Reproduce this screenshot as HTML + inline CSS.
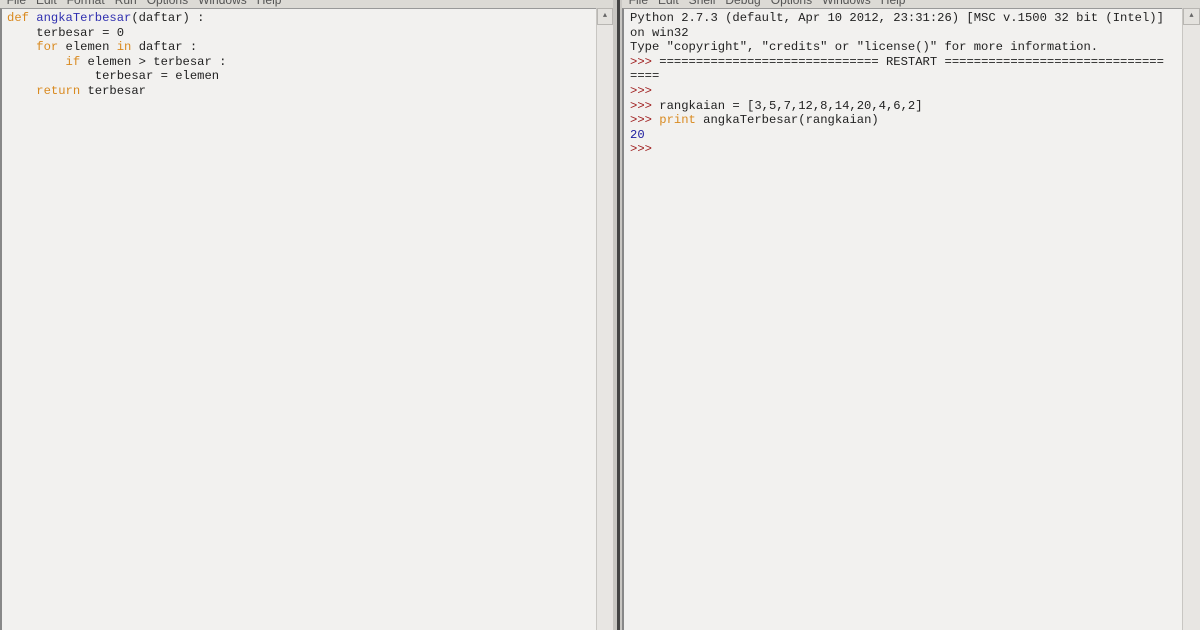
<!DOCTYPE html>
<html><head><style>
body{margin:0;width:1200px;height:630px;overflow:hidden;background:#d4d0c8;position:relative;font-family:"Liberation Mono",monospace;}
.menu{position:absolute;top:0;height:8px;background:#dcdad5;font:12px "Liberation Sans",sans-serif;color:#555;line-height:0px;overflow:hidden;white-space:pre}
.pane{position:absolute;top:8px;bottom:0;background:#f2f1ef;}
pre{margin:0;font-family:"Liberation Mono",monospace;font-size:12.2px;line-height:14.6px;color:#222;position:absolute}
.k{color:#d98a20}.f{color:#3030b0}.p{color:#a02020}.o{color:#2020a0}
.sb{position:absolute;top:8px;bottom:0;width:17px;background:#e8e6e3;border-left:1px solid #c8c6c2}
.btn{position:absolute;left:0;top:0;width:16px;height:17px;background:#e4e2de;border:1px solid #b8b6b2;box-sizing:border-box;font-size:7px;color:#666;text-align:center;line-height:15px}
</style></head><body>
<div class="menu" style="left:0;width:613px">  File   Edit   Format   Run   Options   Windows   Help</div>
<div class="menu" style="left:622px;width:578px">  File   Edit   Shell   Debug   Options   Windows   Help</div>
<div class="pane" style="left:0;width:596px;border-left:2px solid #888;box-sizing:border-box;border-top:1px solid #999">
<pre style="left:5px;top:2px"><span class="k">def</span> <span class="f">angkaTerbesar</span>(daftar) :
    terbesar = 0
    <span class="k">for</span> elemen <span class="k">in</span> daftar :
        <span class="k">if</span> elemen &gt; terbesar :
            terbesar = elemen
    <span class="k">return</span> terbesar</pre>
</div>
<div class="sb" style="left:596px"><div class="btn">▲</div></div>
<div style="position:absolute;left:613px;top:0;width:9px;bottom:0;background:#c9c7c3"></div>
<div style="position:absolute;left:617px;top:0;width:3px;bottom:0;background:#444"></div>
<div class="pane" style="left:622px;width:560px;border-left:2px solid #888;box-sizing:border-box;border-top:1px solid #999">
<pre style="left:6px;top:2px">Python 2.7.3 (default, Apr 10 2012, 23:31:26) [MSC v.1500 32 bit (Intel)]
on win32
Type "copyright", "credits" or "license()" for more information.
<span class="p">&gt;&gt;&gt;</span> ============================== RESTART ==============================
====
<span class="p">&gt;&gt;&gt;</span> 
<span class="p">&gt;&gt;&gt;</span> rangkaian = [3,5,7,12,8,14,20,4,6,2]
<span class="p">&gt;&gt;&gt;</span> <span class="k">print</span> angkaTerbesar(rangkaian)
<span class="o">20</span>
<span class="p">&gt;&gt;&gt;</span> </pre>
</div>
<div class="sb" style="left:1182px;width:18px"><div class="btn" style="width:17px">▲</div></div>
</body></html>
